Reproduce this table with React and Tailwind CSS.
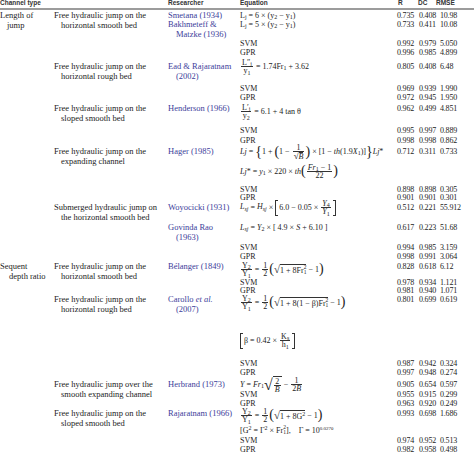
const F = ({ n, d }) => (
  <span className="inline-flex flex-col items-center align-middle mx-[1px]">
    <span className="leading-[7px] px-[1px]">{n}</span>
    <span className="border-t border-[#333] w-full text-center leading-[7px] px-[1px] pt-[0.5px]">{d}</span>
  </span>
);

const Sq = ({ children, tall }) => (
  <span className="inline-flex items-end align-middle">
    <span className={tall ? 'text-[16px] leading-[16px]' : 'text-[11px] leading-[11px]'}>√</span>
    <span className="border-t border-[#333] leading-[9px] pt-[1px]">{children}</span>
  </span>
);

const P = ({ c }) => (
  <span className="inline-block align-middle text-[14px] leading-[14px] font-light">{c}</span>
);

const BL = () => <span className="inline-block align-middle w-[3px] h-[16px] border-l border-y border-[#333] mr-[1px]" />;
const BR = () => <span className="inline-block align-middle w-[3px] h-[16px] border-r border-y border-[#333] ml-[1px]" />;

const Fr2 = () => (
  <>
    Fr
    <span className="inline-flex flex-col align-middle text-[5.5px] leading-[5px] -mt-[2px]">
      <span>2</span>
      <span>1</span>
    </span>
  </>
);

const Y21 = () => <F n={<>Y<sub>2</sub></>} d={<>Y<sub>1</sub></>} />;

const rows = [
  { h: 'h-[9px]', ct: ['Length of', 'jump'], d: ['Free hydraulic jump on the', 'horizontal smooth bed'], r: ['Smetana (1934)'], eq: <>L<sub>j</sub> = 6 × (y<sub>2</sub> − y<sub>1</sub>)</>, n: ['0.735', '0.408', '10.98'] },
  { h: 'h-[9px]', r: ['Bakhmeteff &', 'Matzke (1936)'], eq: <>L<sub>j</sub> = 5 × (y<sub>2</sub> − y<sub>1</sub>)</>, n: ['0.733', '0.411', '10.08'] },
  { h: 'h-[10px]' },
  { h: 'h-[9px]', eq: 'SVM', n: ['0.992', '0.979', '5.050'] },
  { h: 'h-[14px]', eq: 'GPR', n: ['0.996', '0.985', '4.899'] },
  { h: 'h-[22px]', d: ['Free hydraulic jump on the', 'horizontal rough bed'], r: ['Ead & Rajaratnam', '(2002)'], eqc: '-mt-[3px]', eq: <><F n={<>L″<sub>j</sub></>} d={<>y<sub>1</sub></>} /> = 1.74Fr<sub>1</sub> + 3.62</>, n: ['0.805', '0.408', '6.48'] },
  { h: 'h-[9px]', eq: 'SVM', n: ['0.969', '0.939', '1.990'] },
  { h: 'h-[11px]', eq: 'GPR', n: ['0.972', '0.945', '1.950'] },
  { h: 'h-[22px]', d: ['Free hydraulic jump on the', 'sloped smooth bed'], r: ['Henderson (1966)'], eqc: 'mt-[0px]', eq: <><F n={<>L′<sub>j</sub></>} d={<>y<sub>2</sub></>} /> = 6.1 + 4 tan θ</>, n: ['0.962', '0.499', '4.851'] },
  { h: 'h-[10px]', eq: 'SVM', n: ['0.995', '0.997', '0.889'] },
  { h: 'h-[11px]', eq: 'GPR', n: ['0.998', '0.998', '0.862'] },
  {
    h: 'h-[20px]', d: ['Free hydraulic jump on the', 'expanding channel'], r: ['Hager (1985)'], eqc: '-mt-[3px] whitespace-nowrap',
    eq: <><i>Lj</i> = <P c="{" />1 + <P c="(" />1 − <F n="1" d={<span className="inline-flex items-end"><span className="text-[9px] leading-[8px]">√</span><span className="border-t border-[#333] leading-[7px]"><i>B</i></span></span>} /><P c=")" /> × [1 − <i>th</i>(1.9<i>X</i><sub>1</sub>)]<P c="}" /><i>Lj</i>*</>,
    n: ['0.712', '0.311', '0.733'],
  },
  { h: 'h-[18px]', eqc: '-mt-[3px] whitespace-nowrap', eq: <><i>Lj</i>* = <i>y</i><sub>1</sub> × 220 × <i>th</i><P c="(" /><F n={<><i>Fr</i><sub>1</sub> − 1</>} d="22" /><P c=")" /></> },
  { h: 'h-[8px]', eq: 'SVM', n: ['0.898', '0.898', '0.305'] },
  { h: 'h-[10px]', eq: 'GPR', n: ['0.901', '0.901', '0.301'] },
  {
    h: 'h-[20px]', d: ['Submerged hydraulic jump on', 'the horizontal smooth bed'], r: ['Woyocicki (1931)'], eqc: '-mt-[3px] whitespace-nowrap',
    eq: <><i>L<sub>sj</sub></i> = <i>H<sub>sj</sub></i> × <BL />6.0 − 0.05 × <F n={<><i>Y</i><sub>4</sub></>} d={<><i>Y</i><sub>1</sub></>} /><BR /></>,
    n: ['0.512', '0.221', '55.912'],
  },
  { h: 'h-[20px]', r: ['Govinda Rao', '(1963)'], eq: <><i>L<sub>sj</sub></i> = <i>Y</i><sub>2</sub> × [ 4.9 × <i>S</i> + 6.10 ]</>, n: ['0.617', '0.223', '51.68'] },
  { h: 'h-[9px]', eq: 'SVM', n: ['0.994', '0.985', '3.159'] },
  { h: 'h-[10px]', eq: 'GPR', n: ['0.998', '0.991', '3.064'] },
  {
    h: 'h-[16px]', ct: ['Sequent', 'depth ratio'], d: ['Free hydraulic jump on the', 'horizontal smooth bed'], r: ['Bélanger (1849)'], eqc: 'mt-[0px] whitespace-nowrap',
    eq: <><Y21 /> = <F n="1" d="2" /><P c="(" /><Sq>1 + 8<Fr2 /></Sq> − 1<P c=")" /></>,
    n: ['0.828', '0.618', '6.12'],
  },
  { h: 'h-[8px]', eq: 'SVM', n: ['0.978', '0.934', '1.121'] },
  { h: 'h-[9px]', eq: 'GPR', n: ['0.981', '0.940', '1.071'] },
  {
    h: 'h-[41px]', d: ['Free hydraulic jump on the', 'horizontal rough bed'], r: [<>Carollo <i>et al.</i></>, '(2007)'], eqc: 'mt-[0px] whitespace-nowrap',
    eq: <><Y21 /> = <F n="1" d="2" /><P c="(" /><Sq>1 + 8(1 − β)<Fr2 /></Sq> − 1<P c=")" /></>,
    n: ['0.801', '0.699', '0.619'],
  },
  { h: 'h-[23px]', eqc: '-mt-[3px] whitespace-nowrap', eq: <><BL />β = 0.42 × <F n={<>K<sub>s</sub></>} d={<>h<sub>1</sub></>} /><BR /></> },
  { h: 'h-[9px]', eq: 'SVM', n: ['0.987', '0.942', '0.324'] },
  { h: 'h-[12px]', eq: 'GPR', n: ['0.997', '0.948', '0.274'] },
  {
    h: 'h-[10px]', d: ['Free hydraulic jump over the', 'smooth expanding channel'], r: ['Herbrand (1973)'], eqc: '-mt-[4px] whitespace-nowrap',
    eq: <><i>Y</i> = <i>Fr</i><sub>1</sub><Sq tall><F n="2" d={<i>B</i>} /></Sq> − <F n="1" d={<>2<i>B</i></>} /></>,
    n: ['0.905', '0.654', '0.597'],
  },
  { h: 'h-[9px]', eq: 'SVM', n: ['0.955', '0.915', '0.299'] },
  { h: 'h-[10px]', eq: 'GPR', n: ['0.963', '0.920', '0.249'] },
  {
    h: 'h-[17px]', d: ['Free hydraulic jump on the', 'sloped smooth bed'], r: ['Rajaratnam (1966)'], eqc: '-mt-[1px] whitespace-nowrap',
    eq: <><Y21 /> = <F n="1" d="2" /><P c="(" /><Sq>1 + 8G<sup>2</sup></Sq> − 1<P c=")" /></>,
    n: ['0.993', '0.698', '1.686'],
  },
  { h: 'h-[10px]', eqc: 'whitespace-nowrap', eq: <>[G<sup>2</sup> = Γ<sup>2</sup> × <Fr2 />],&nbsp;&nbsp;&nbsp; Γ = 10<sup className="text-[5px]">0.027θ</sup></> },
  { h: 'h-[9px]', eq: 'SVM', n: ['0.974', '0.952', '0.513'] },
  { h: 'h-[9px]', eq: 'GPR', n: ['0.982', '0.958', '0.498'] },
];

const Lines = ({ lines, indent, color }) => (
  <div className={`-mt-[0.5px] leading-[10px] whitespace-nowrap ${color || ''}`}>
    {lines.map((l, i) => (
      <div key={i} className={i > 0 ? indent : ''}>{l}</div>
    ))}
  </div>
);

export default function App() {
  return (
    <div className="w-[474px] h-[460px] overflow-hidden bg-white text-[#232323] font-['Liberation_Serif',serif] text-[8.5px]">
      {/* header */}
      <div className="grid grid-cols-[54px_114px_72px_158px_20px_18px_1fr] h-[8px] font-['Liberation_Sans',sans-serif] font-bold text-[6.5px] leading-[6px] text-[#333]">
        <div>Channel type</div>
        <div />
        <div>Researcher</div>
        <div>Equation</div>
        <div>R</div>
        <div>DC</div>
        <div>RMSE</div>
      </div>
      <div className="h-[2px] bg-[#9c9c9c]" />
      <div className="h-[0.5px]" />

      {rows.map((row, i) => (
        <div key={i} className={`grid grid-cols-[54px_114px_72px_157px_22px_21px_1fr] leading-[9px] ${row.h}`}>
          <div>{row.ct && <Lines lines={row.ct} indent={row.ct[0] === 'Sequent' ? 'pl-[9px]' : 'pl-[7px]'} />}</div>
          <div>{row.d && <Lines lines={row.d} indent="pl-[7px]" />}</div>
          <div>{row.r && <Lines lines={row.r} indent="pl-[8px]" color="text-[#3c3d9a]" />}</div>
          <div className={`text-[8px] ${row.eqc || 'whitespace-nowrap'}`}>{row.eq}</div>
          {row.n
            ? row.n.map((v, j) => <div key={j} className="text-[8px] tracking-[-0.2px]">{v}</div>)
            : <><div /><div /><div /></>}
        </div>
      ))}
    </div>
  );
}
